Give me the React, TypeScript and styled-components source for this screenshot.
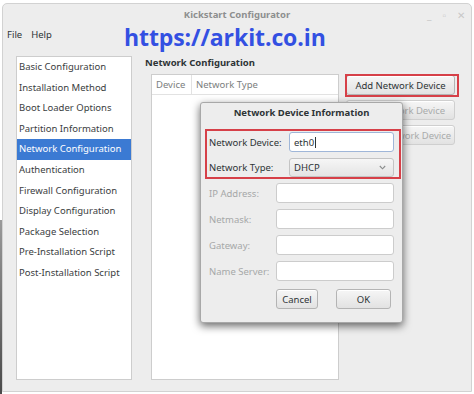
import React from "react";
import styled, { createGlobalStyle, css } from "styled-components";

const Global = createGlobalStyle`
  html, body { margin: 0; padding: 0; background: #ffffff; }
  body { width: 474px; height: 394px; overflow: hidden; font-family: "Noto Sans", "Open Sans", sans-serif; font-size: 9.5px; color: #2e3436; }
  #root { width: 474px; height: 394px; position: relative; }
`;

const DarkEdge = styled.div`
  position: absolute;
  left: 0;
  top: 220px;
  width: 2px;
  height: 174px;
  background: linear-gradient(#9a9a9a, #4a4a4a);
`;

const Window = styled.div`
  position: absolute;
  left: 2px;
  top: 3px;
  width: 470px;
  height: 389px;
  box-sizing: border-box;
  background: #ededed;
  border: 1px solid #d2d2d2;
  border-radius: 5px 5px 0 0;
  display: flex;
  flex-direction: column;
`;

const TitleBar = styled.div`
  height: 21px;
  display: flex;
  align-items: center;
  justify-content: center;
  position: relative;
  font-weight: 700;
  color: #8d8f8f;
`;

const Controls = styled.div`
  position: absolute;
  right: 6px;
  top: 4px;
  display: flex;
  gap: 11px;
  color: #c8c8c8;
  font-size: 10px;
  font-weight: 400;
`;

const MenuBar = styled.div`
  height: 18px;
  display: flex;
  align-items: center;
  gap: 9px;
  padding-left: 4px;
`;

const Watermark = styled.div`
  position: absolute;
  left: 124px;
  top: 21px;
  font-family: "Open Sans", "Noto Sans", sans-serif;
  font-weight: 700;
  font-size: 23px;
  color: #3350e2;
  letter-spacing: -0.1px;
  white-space: nowrap;
`;

const Body = styled.div`
  display: flex;
  padding: 13px 0 0 13px;
  gap: 13px;
`;

const Sidebar = styled.ul`
  list-style: none;
  margin: 0;
  padding: 0;
  width: 116px;
  height: 324px;
  box-sizing: border-box;
  background: #fff;
  border: 1px solid #cdcdcd;
`;

const Item = styled.li<{ $active?: boolean }>`
  height: 20.6px;
  line-height: 20.6px;
  padding-left: 2px;
  white-space: nowrap;
  color: #3a3d3e;
  ${(p) =>
    p.$active &&
    css`
      background: #3b7ad3;
      color: #fff;
    `}
`;

const Main = styled.div`
  display: flex;
  flex-direction: column;
`;

const Heading = styled.div`
  font-weight: 700;
  height: 18px;
  line-height: 14px;
`;

const Row = styled.div`
  display: flex;
  gap: 7px;
  padding-left: 6px;
`;

const Table = styled.div`
  width: 188px;
  height: 306px;
  box-sizing: border-box;
  background: #fff;
  border: 1px solid #cdcdcd;
`;

const TableHead = styled.div`
  display: flex;
  height: 19px;
  border-bottom: 1px solid #e2e2e2;
  color: #7b7e7e;
`;

const HeadCell = styled.div<{ $w?: number }>`
  ${(p) => (p.$w ? `width: ${p.$w}px;` : "flex: 1;")}
  padding-left: 4px;
  line-height: 19px;
  box-sizing: border-box;
  border-right: ${(p) => (p.$w ? "1px solid #e2e2e2" : "none")};
`;

const Buttons = styled.div`
  display: flex;
  flex-direction: column;
  gap: 5px;
  padding-top: 1px;
`;

const Button = styled.button<{ $disabled?: boolean; $w?: number }>`
  height: 20px;
  width: ${(p) => (p.$w ? `${p.$w}px` : "auto")};
  padding: 0;
  font-family: inherit;
  font-size: 9.5px;
  color: ${(p) => (p.$disabled ? "#a9abab" : "#2e3436")};
  background: linear-gradient(#f6f6f6, #e2e2e2);
  border: 1px solid ${(p) => (p.$disabled ? "#cfcfcf" : "#b4b4b4")};
  border-radius: 3px;
  box-shadow: inset 0 1px 0 #fff;
  white-space: nowrap;
`;

const RedBox = styled.div`
  position: absolute;
  border: 2px solid #d64048;
  box-sizing: border-box;
  pointer-events: none;
`;

const Dialog = styled.div`
  position: absolute;
  left: 200px;
  top: 102px;
  width: 203px;
  height: 221px;
  box-sizing: border-box;
  background: #ededed;
  border: 1px solid #a8a8a8;
  border-radius: 3px;
  box-shadow: 0 3px 8px rgba(0, 0, 0, 0.6);
  display: flex;
  flex-direction: column;
  padding: 0 8px;
`;

const DialogTitle = styled.div`
  height: 19px;
  line-height: 19px;
  text-align: center;
  font-weight: 700;
  margin-bottom: 10px;
`;

const FormGrid = styled.div<{ $label: number; $top?: number }>`
  display: grid;
  grid-template-columns: ${(p) => p.$label}px 1fr;
  row-gap: 6px;
  align-items: center;
  margin-top: ${(p) => p.$top ?? 0}px;
`;

const Label = styled.div<{ $disabled?: boolean }>`
  color: ${(p) => (p.$disabled ? "#a6a8a8" : "#2e3436")};
  white-space: nowrap;
`;

const Input = styled.div<{ $focus?: boolean }>`
  height: 20px;
  box-sizing: border-box;
  background: #fff;
  border: 1px solid ${(p) => (p.$focus ? "#9fb6d8" : "#cccccc")};
  border-radius: 3px;
  padding-left: 4px;
  display: flex;
  align-items: center;
`;

const Caret = styled.span`
  display: inline-block;
  width: 1px;
  height: 11px;
  background: #2e3436;
  margin-left: 1px;
  vertical-align: middle;
`;

const Select = styled.div`
  height: 19px;
  box-sizing: border-box;
  background: linear-gradient(#f6f6f6, #e4e4e4);
  border: 1px solid #c4c4c4;
  border-radius: 3px;
  padding: 0 7px 0 4px;
  display: flex;
  align-items: center;
  justify-content: space-between;
`;

const Footer = styled.div`
  display: flex;
  gap: 18px;
  margin-left: 67px;
  margin-top: 8px;
`;

const items = [
  "Basic Configuration",
  "Installation Method",
  "Boot Loader Options",
  "Partition Information",
  "Network Configuration",
  "Authentication",
  "Firewall Configuration",
  "Display Configuration",
  "Package Selection",
  "Pre-Installation Script",
  "Post-Installation Script",
];

export default function App() {
  return (
    <>
      <Global />
      <DarkEdge />
      <Window>
        <TitleBar>
          Kickstart Configurator
          <Controls>
            <span>_</span>
            <span>▫</span>
            <span>✕</span>
          </Controls>
        </TitleBar>
        <MenuBar>
          <span>File</span>
          <span>Help</span>
        </MenuBar>
        <Body>
          <Sidebar>
            {items.map((t) => (
              <Item key={t} $active={t === "Network Configuration"}>
                {t}
              </Item>
            ))}
          </Sidebar>
          <Main>
            <Heading>Network Configuration</Heading>
            <Row>
              <Table>
                <TableHead>
                  <HeadCell $w={40}>Device</HeadCell>
                  <HeadCell>Network Type</HeadCell>
                </TableHead>
              </Table>
              <Buttons>
                <Button $w={109}>Add Network Device</Button>
                <Button $w={109} $disabled>
                  Edit Network Device
                </Button>
                <Button $w={109} $disabled>
                  Delete Network Device
                </Button>
              </Buttons>
            </Row>
          </Main>
        </Body>
      </Window>
      <Watermark>https://arkit.co.in</Watermark>
      <RedBox style={{ left: 345, top: 74, width: 114, height: 23 }} />
      <Dialog>
        <DialogTitle>Network Device Information</DialogTitle>
        <FormGrid $label={80}>
          <Label>Network Device:</Label>
          <Input $focus>
            <span>
              eth0
              <Caret />
            </span>
          </Input>
          <Label>Network Type:</Label>
          <Select>
            <span>DHCP</span>
            <svg width="7" height="5" viewBox="0 0 7 5">
              <path d="M0.8 1 L3.5 3.8 L6.2 1" fill="none" stroke="#8a8c8c" strokeWidth="1.1" />
            </svg>
          </Select>
        </FormGrid>
        <FormGrid $label={67} $top={6}>
          <Label $disabled>IP Address:</Label>
          <Input />
          <Label $disabled>Netmask:</Label>
          <Input />
          <Label $disabled>Gateway:</Label>
          <Input />
          <Label $disabled>Name Server:</Label>
          <Input />
        </FormGrid>
        <Footer>
          <Button $w={42}>Cancel</Button>
          <Button $w={55}>OK</Button>
        </Footer>
      </Dialog>
      <RedBox style={{ left: 205, top: 129, width: 196, height: 50 }} />
    </>
  );
}
